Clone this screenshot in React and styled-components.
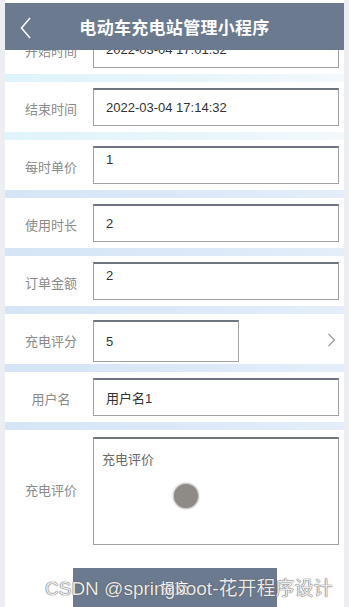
import React from 'react'
import styled, { createGlobalStyle } from 'styled-components'

const Global = createGlobalStyle`
  html, body {
    margin: 0;
    padding: 0;
    background: #eceef1;
    font-family: "Liberation Sans", "Noto Sans CJK SC", sans-serif;
    overflow: hidden;
  }
`

const fields = [
    { label: '开始时间', value: '2022-03-04 17:01:32', tone: 'cyan' },
    { label: '结束时间', value: '2022-03-04 17:14:32', tone: 'cyan' },
    { label: '每时单价', value: '1', tone: 'blue', top: true },
    { label: '使用时长', value: '2', tone: 'blue' },
    { label: '订单金额', value: '2', tone: 'blue', top: true },
    { label: '充电评分', value: '5', tone: 'blue', short: true },
    { label: '用户名', value: '用户名1', tone: 'blue' },
]

export default function App() {
    return (
        <Page>
            <Global />
            <Header>
                <Back>
                    <svg width="12" height="22" viewBox="0 0 12 22">
                        <path d="M10 1 L1.5 11 L10 21" fill="none" stroke="#fff" strokeWidth="1.5" />
                    </svg>
                </Back>
                <Title>电动车充电站管理小程序</Title>
            </Header>
            <Form>
                {fields.map(f => (
                    <React.Fragment key={f.label}>
                        <Row>
                            <Label>{f.label}</Label>
                            <Field short={f.short} top={f.top}>{f.value}</Field>
                            {f.short && (
                                <Chevron>
                                    <svg width="9" height="14" viewBox="0 0 9 14">
                                        <path d="M1.5 1 L7.5 7 L1.5 13" fill="none" stroke="#9a9a9a" strokeWidth="1.3" />
                                    </svg>
                                </Chevron>
                            )}
                        </Row>
                        <Divider tone={f.tone} />
                    </React.Fragment>
                ))}
                <AreaRow>
                    <Label>充电评价</Label>
                    <Area>
                        <Placeholder>充电评价</Placeholder>
                        <Dot />
                    </Area>
                </AreaRow>
                <Footer>
                    <Submit>提交</Submit>
                </Footer>
            </Form>
            <Watermark>CSDN @springboot-花开程序设计</Watermark>
        </Page>
    )
}

const Page = styled.div`
    position: relative;
    height: 607px;
    padding: 0 5px;
    overflow: hidden;
`

const Header = styled.div`
    position: fixed;
    top: 3px;
    left: 5px;
    right: 5px;
    height: 47px;
    background: #6b7a8f;
    display: flex;
    align-items: center;
    justify-content: center;
    z-index: 5;
`

const Back = styled.div`
    position: absolute;
    left: 15px;
    top: 14px;
    display: flex;
`

const Title = styled.div`
    color: #fff;
    font-size: 17px;
    font-weight: bold;
    letter-spacing: 0.3px;
`

const Form = styled.div`
    background: #fff;
    padding-top: 24px;
`

const Row = styled.div`
    display: flex;
    align-items: flex-start;
    height: 50px;
    padding: 6px 5px 0 0;
    box-sizing: border-box;
`

const Label = styled.div`
    width: 88px;
    padding: 0 0 4px 4px;
    box-sizing: border-box;
    text-align: center;
    align-self: center;
    font-size: 13px;
    color: #8a8a8a;
`

const Field = styled.div`
    width: ${p => (p.short ? '146px' : '246px')};
    height: ${p => (p.short ? '42px' : '38px')};
    box-sizing: border-box;
    border: 1px solid #a2a2a2;
    border-top: 2px solid #6f757e;
    padding: ${p => (p.top ? '4px 12px' : '0 12px')};
    display: flex;
    align-items: ${p => (p.top ? 'flex-start' : 'center')};
    font-size: 13px;
    color: #333;
`

const Chevron = styled.div`
    margin-left: auto;
    margin-right: 3px;
    align-self: center;
    display: flex;
    padding-bottom: 4px;
`

const Divider = styled.div`
    height: 8px;
    background: ${p =>
        p.tone === 'cyan'
            ? 'linear-gradient(to right, #dff3fa, #e8f6fb 60%, #f3f8fb)'
            : 'linear-gradient(to right, #d5e5f6, #dce9f8 60%, #e4eefa)'};
`

const AreaRow = styled.div`
    display: flex;
    padding: 7px 5px 0 0;
`

const Area = styled.div`
    position: relative;
    width: 246px;
    height: 108px;
    box-sizing: border-box;
    border: 1px solid #a2a2a2;
    border-top: 2px solid #6f757e;
    padding: 10px 8px;
`

const Placeholder = styled.div`
    font-size: 13px;
    color: #6a6a6a;
`

const Dot = styled.div`
    position: absolute;
    left: 80px;
    top: 45px;
    width: 24px;
    height: 24px;
    border-radius: 50%;
    background: #8e8a86;
    box-shadow: 0 0 2px 1px #b5b1ac;
`

const Footer = styled.div`
    display: flex;
    justify-content: center;
    padding-top: 23px;
    height: 70px;
`

const Submit = styled.div`
    width: 204px;
    height: 42px;
    background: #6b7a8f;
    color: #fff;
    font-size: 14px;
    display: flex;
    align-items: center;
    justify-content: center;
    padding-bottom: 4px;
    box-sizing: border-box;
`

const Watermark = styled.div`
    position: absolute;
    left: 45px;
    top: 573px;
    font-size: 19px;
    color: rgba(255, 255, 255, 0.88);
    text-shadow: 0 0 1px #555, 0 0 1px #555;
    white-space: nowrap;
    z-index: 6;
`
